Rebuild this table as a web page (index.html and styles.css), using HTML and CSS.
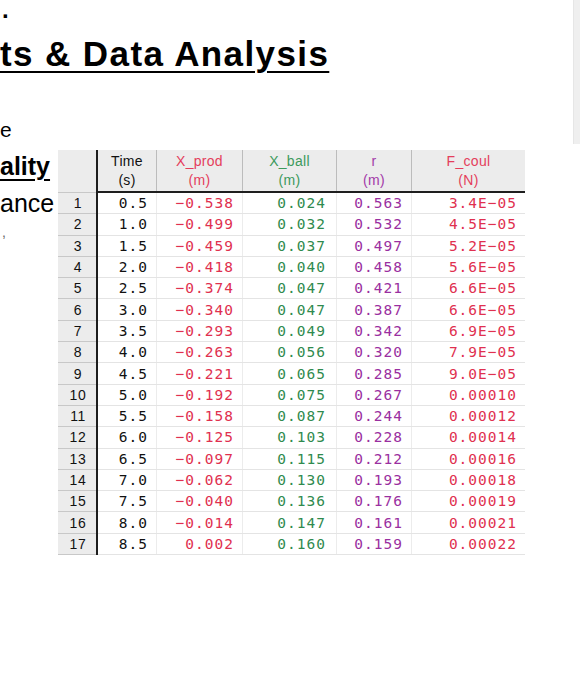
FILE: index.html
```html
<!DOCTYPE html>
<html>
<head>
<meta charset="utf-8">
<link rel="stylesheet" href="styles.css">
</head>
<body>
<div class="page">
  <div class="topline">.</div>
  <h1 class="title">ts &amp; Data Analysis</h1>
  <div class="content">
    <div class="side">
      <div class="side-line small">e</div>
      <div class="side-line bold">ality</div>
      <div class="side-line">ance</div>
      <div class="side-line tiny">,</div>
    </div>
    <table class="grid">
      <thead>
        <tr>
          <th class="rn"></th>
          <th class="c-time">Time<br>(s)</th>
          <th class="c-red">X_prod<br>(m)</th>
          <th class="c-green">X_ball<br>(m)</th>
          <th class="c-purple">r<br>(m)</th>
          <th class="c-red last">F_coul<br>(N)</th>
        </tr>
      </thead>
      <tbody>
        <tr><td class="rn">1</td><td class="d first">0.5</td><td class="d red">−0.538</td><td class="d green pr">0.024</td><td class="d purple">0.563</td><td class="d red">3.4E−05</td></tr>
        <tr><td class="rn">2</td><td class="d first">1.0</td><td class="d red">−0.499</td><td class="d green pr">0.032</td><td class="d purple">0.532</td><td class="d red">4.5E−05</td></tr>
        <tr><td class="rn">3</td><td class="d first">1.5</td><td class="d red">−0.459</td><td class="d green pr">0.037</td><td class="d purple">0.497</td><td class="d red">5.2E−05</td></tr>
        <tr><td class="rn">4</td><td class="d first">2.0</td><td class="d red">−0.418</td><td class="d green pr">0.040</td><td class="d purple">0.458</td><td class="d red">5.6E−05</td></tr>
        <tr><td class="rn">5</td><td class="d first">2.5</td><td class="d red">−0.374</td><td class="d green pr">0.047</td><td class="d purple">0.421</td><td class="d red">6.6E−05</td></tr>
        <tr><td class="rn">6</td><td class="d first">3.0</td><td class="d red">−0.340</td><td class="d green pr">0.047</td><td class="d purple">0.387</td><td class="d red">6.6E−05</td></tr>
        <tr><td class="rn">7</td><td class="d first">3.5</td><td class="d red">−0.293</td><td class="d green pr">0.049</td><td class="d purple">0.342</td><td class="d red">6.9E−05</td></tr>
        <tr><td class="rn">8</td><td class="d first">4.0</td><td class="d red">−0.263</td><td class="d green pr">0.056</td><td class="d purple">0.320</td><td class="d red">7.9E−05</td></tr>
        <tr><td class="rn">9</td><td class="d first">4.5</td><td class="d red">−0.221</td><td class="d green pr">0.065</td><td class="d purple">0.285</td><td class="d red">9.0E−05</td></tr>
        <tr><td class="rn">10</td><td class="d first">5.0</td><td class="d red">−0.192</td><td class="d green pr">0.075</td><td class="d purple">0.267</td><td class="d red">0.00010</td></tr>
        <tr><td class="rn">11</td><td class="d first">5.5</td><td class="d red">−0.158</td><td class="d green pr">0.087</td><td class="d purple">0.244</td><td class="d red">0.00012</td></tr>
        <tr><td class="rn">12</td><td class="d first">6.0</td><td class="d red">−0.125</td><td class="d green pr">0.103</td><td class="d purple">0.228</td><td class="d red">0.00014</td></tr>
        <tr><td class="rn">13</td><td class="d first">6.5</td><td class="d red">−0.097</td><td class="d green pr">0.115</td><td class="d purple">0.212</td><td class="d red">0.00016</td></tr>
        <tr><td class="rn">14</td><td class="d first">7.0</td><td class="d red">−0.062</td><td class="d green pr">0.130</td><td class="d purple">0.193</td><td class="d red">0.00018</td></tr>
        <tr><td class="rn">15</td><td class="d first">7.5</td><td class="d red">−0.040</td><td class="d green pr">0.136</td><td class="d purple">0.176</td><td class="d red">0.00019</td></tr>
        <tr><td class="rn">16</td><td class="d first">8.0</td><td class="d red">−0.014</td><td class="d green pr">0.147</td><td class="d purple">0.161</td><td class="d red">0.00021</td></tr>
        <tr><td class="rn">17</td><td class="d first">8.5</td><td class="d red">0.002</td><td class="d green pr">0.160</td><td class="d purple">0.159</td><td class="d red">0.00022</td></tr>
      </tbody>
    </table>
  </div>
  <div class="scrollbar"></div>
</div>
</body>
</html>
```
FILE: styles.css
```css
html, body {
  margin: 0;
  padding: 0;
  background: #ffffff;
}
body {
  width: 582px;
  height: 700px;
  overflow: hidden;
  font-family: "Liberation Sans", Arial, sans-serif;
  color: #000;
}
.page {
  position: relative;
  width: 582px;
  height: 700px;
}
.topline {
  font-weight: bold;
  font-size: 24px;
  line-height: 10px;
  height: 10px;
  padding: 5px 0 0 2px;
}
.title {
  margin: 19px 0 0 0;
  font-size: 35px;
  line-height: 40px;
  font-weight: bold;
  letter-spacing: 1.4px;
  text-decoration: underline;
  text-decoration-thickness: 2px;
  text-underline-offset: 5px;
  white-space: nowrap;
}
.content {
  display: flex;
  align-items: flex-start;
  margin-top: 37px;
}
.side {
  width: 58px;
  flex: none;
  font-size: 25px;
  line-height: 37px;
  white-space: nowrap;
}
.side-line.small {
  font-size: 21px;
}
.side-line.bold {
  font-weight: bold;
  text-decoration: underline;
  text-decoration-thickness: 2px;
  text-underline-offset: 4px;
}
.side-line.tiny {
  font-size: 14px;
  line-height: 20px;
  color: #666;
  padding-left: 2px;
}
.grid {
  margin-top: 39px;
  border-collapse: collapse;
  table-layout: fixed;
  width: 467px;
}
.grid th {
  background: #ececec;
  height: 41px;
  padding: 0;
  font-weight: normal;
  font-size: 14px;
  line-height: 19px;
  letter-spacing: 0.3px;
  text-align: center;
  vertical-align: middle;
  border-bottom: 2px solid #1e1e1e;
  border-right: 1px solid #bcbcbc;
}
.grid th.rn {
  width: 38px;
  border-bottom: 1px solid #c8c8c8;
  border-right: none;
}
.grid th.c-time { width: 58px; border-left: 2px solid #1e1e1e; }
.grid th:nth-child(3) { width: 85px; }
.grid th:nth-child(4) { width: 93px; }
.grid th:nth-child(5) { width: 74px; }
.grid th.last { border-right: none; }
.c-time { color: #111; }
.c-red { color: #e43e5c; }
.c-green { color: #3d9a5c; }
.c-purple { color: #a33aa8; }
.grid tbody tr {
  height: 21.3px;
}
.grid td {
  padding: 0 8px 0 0;
  height: 20.3px;
}
.grid td.rn {
  background: #ececec;
  text-align: center;
  font-size: 14px;
  letter-spacing: 0.6px;
  padding: 0 0 0 2px;
  border-bottom: 1px solid #c8c8c8;
  color: #111;
}
.grid td.d {
  font-family: "DejaVu Sans Mono", monospace;
  font-size: 14.5px;
  letter-spacing: 1px;
  text-align: right;
  border-bottom: 1px solid #e4e4e4;
  border-right: 1px solid #ececec;
  color: #111;
}
.grid td.d:last-child { border-right: none; }
.grid td.first { border-left: 2px solid #1e1e1e; }
.grid td.pr { padding-right: 10px; }
.grid td.red { color: #e0304f; }
.grid td.green { color: #2f8a4e; }
.grid td.purple { color: #9a2fa0; }
.scrollbar {
  position: absolute;
  top: 0;
  right: 2px;
  width: 6px;
  height: 144px;
  background: #efefef;
  border-left: 1px solid #e6e6e6;
}
```
